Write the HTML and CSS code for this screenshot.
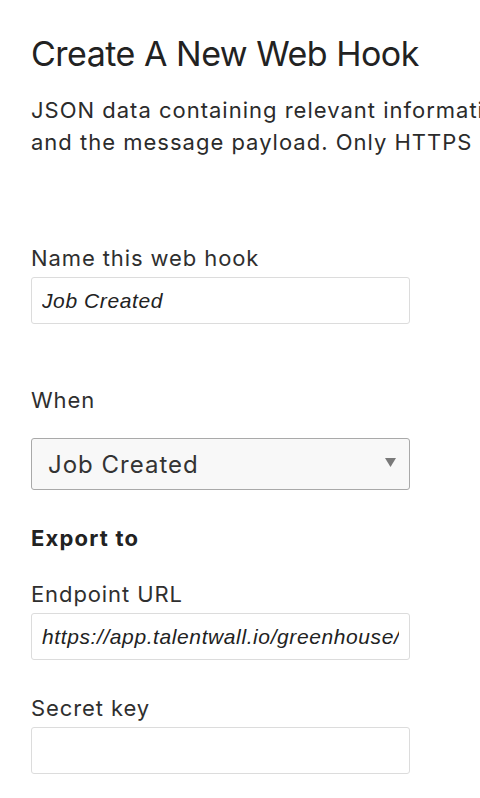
FILE: index.html
```html
<!DOCTYPE html>
<html lang="en">
<head>
<meta charset="utf-8">
<title>Create A New Web Hook</title>
<link rel="stylesheet" href="styles.css">
</head>
<body>
<main class="page">
  <h1 class="title">Create A New Web Hook</h1>
  <p class="intro">JSON data containing relevant information about the event<br>and the message payload. Only HTTPS URLs are supported.</p>

  <form class="form">
    <label class="label label-name" for="name">Name this web hook</label>
    <input class="field" id="name" type="text" value="Job Created">

    <label class="label label-when" for="when">When</label>
    <div class="select-wrap">
      <select class="select" id="when">
        <option>Job Created</option>
      </select>
      <svg class="caret" width="11" height="9" viewBox="0 0 11 9" aria-hidden="true"><path d="M0 0H11L5.5 9Z" fill="#7a7a7a"/></svg>
    </div>

    <h2 class="section">Export to</h2>

    <label class="label label-url" for="url">Endpoint URL</label>
    <input class="field" id="url" type="text" value="https://app.talentwall.io/greenhouse/webhooks">

    <label class="label label-secret" for="secret">Secret key</label>
    <input class="field" id="secret" type="text" value="">
  </form>
</main>
</body>
</html>
```

FILE: styles.css
```css
html, body {
  margin: 0;
  padding: 0;
  background: #fff;
  overflow: hidden;
}

.page {
  width: 760px;
  padding: 34px 0 0 31px;
  font-family: Inter, "Noto Sans", sans-serif;
  color: #2b2b2b;
}

.title {
  margin: 0;
  font-size: 34px;
  line-height: 40px;
  font-weight: 400;
  letter-spacing: -0.5px;
  color: #222;
}

.intro {
  margin: 20px 0 0;
  font-size: 22px;
  line-height: 32px;
  letter-spacing: 1px;
  color: #2b2b2b;
  white-space: nowrap;
}

.form {
  display: flex;
  flex-direction: column;
  align-items: flex-start;
}

.label {
  display: block;
  font-size: 22px;
  line-height: 26px;
  letter-spacing: 0.9px;
  color: #2f2f2f;
}

.label-name { margin-top: 87px; }
.label-when { margin-top: 63px; }
.label-url { margin-top: 30px; }
.label-secret { margin-top: 35px; }

.field {
  box-sizing: border-box;
  width: 379px;
  height: 47px;
  margin: 6px 0 0;
  padding: 0 10px;
  border: 1px solid #dcdcdc;
  border-radius: 3px;
  background: #fff;
  font-family: "Liberation Sans", Arial, sans-serif;
  font-style: italic;
  font-size: 21px;
  letter-spacing: 0.6px;
  color: #222;
  outline: none;
}

.select-wrap {
  position: relative;
  margin-top: 25px;
}

.select {
  box-sizing: border-box;
  width: 379px;
  height: 52px;
  padding: 0 40px 0 16px;
  border: 1px solid #a9a9a9;
  border-radius: 3px;
  background: #f8f8f8;
  font-family: Inter, "Noto Sans", sans-serif;
  font-size: 24px;
  letter-spacing: 1px;
  color: #333;
  appearance: none;
  -webkit-appearance: none;
  outline: none;
}

.caret {
  position: absolute;
  right: 14px;
  top: 20px;
}

.section {
  margin: 35px 0 0;
  font-size: 22px;
  line-height: 26px;
  font-weight: 700;
  letter-spacing: 1.2px;
  color: #222;
}
```
